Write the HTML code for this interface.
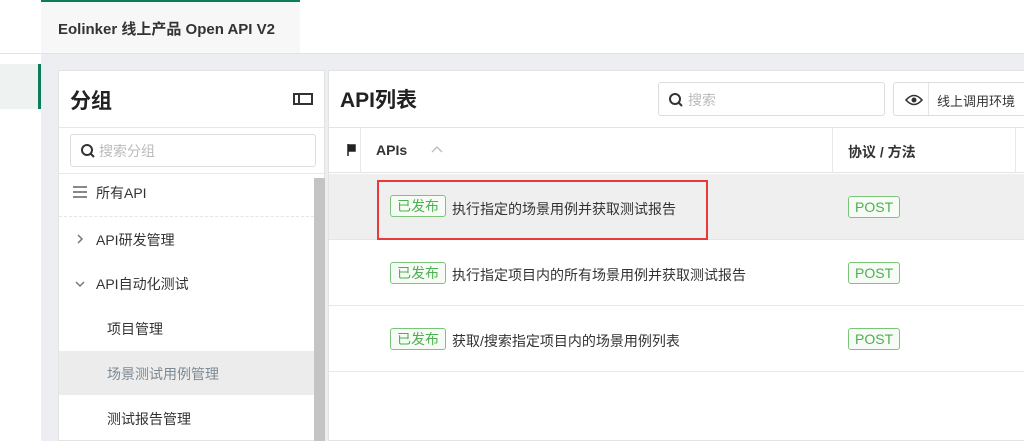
<!DOCTYPE html>
<html><head><meta charset="utf-8"><style>
*{margin:0;padding:0;box-sizing:border-box}
body{width:1024px;height:441px;overflow:hidden;background:#fff;font-family:"Liberation Sans","Noto Sans CJK SC",sans-serif;position:relative;color:#333}
.a{position:absolute}
.tag{position:absolute;border:1px solid #7cc47a;background:#f6fcf5;color:#4caf50;border-radius:3px;font-size:14px;line-height:20px;padding:0 6px}
.t{font-size:14px;color:#333}
</style></head><body>
<div class="a" style="left:0;top:53px;width:1024px;height:1px;background:#e3e3e3"></div>
<div class="a" style="left:41px;top:0;width:259px;height:53px;background:#f7f7f7;border-top:2px solid #0b7d5a"></div>
<div class="a" style="left:58px;top:18px;font-size:15px;font-weight:bold;color:#333">Eolinker 线上产品 Open API V2</div>
<div class="a" style="left:0;top:64px;width:38px;height:45px;background:#eef3f1"></div>
<div class="a" style="left:38px;top:64px;width:3px;height:45px;background:#0b7d5a"></div>
<div class="a" style="left:41px;top:54px;width:983px;height:387px;background:#eceef1"></div>
<!-- left panel -->
<div class="a" style="left:58px;top:70px;width:267px;height:371px;background:#fff;border:1px solid #e3e3e3"></div>
<div class="a" style="left:70px;top:85px;font-size:21px;font-weight:bold;color:#222">分组</div>
<div class="a" style="left:293px;top:93px;width:20px;height:12px;border:2px solid #333"></div>
<div class="a" style="left:298px;top:93px;width:2px;height:12px;background:#333"></div>
<div class="a" style="left:59px;top:127px;width:265px;height:1px;background:#e8e8e8"></div>
<div class="a" style="left:70px;top:134px;width:246px;height:33px;border:1px solid #ddd;border-radius:3px"></div>
<svg class="a" style="left:80px;top:143px" width="16" height="16"><circle cx="7" cy="7" r="5" fill="none" stroke="#333" stroke-width="2"/><line x1="10.5" y1="10.5" x2="14" y2="14" stroke="#333" stroke-width="2"/></svg>
<div class="a" style="left:99px;top:141px;font-size:14px;color:#bbb">搜索分组</div>
<div class="a" style="left:59px;top:173px;width:265px;height:1px;background:#e8e8e8"></div>
<div class="a" style="left:314px;top:178px;width:11px;height:263px;background:#c4c4c4"></div>
<div class="a" style="left:73px;top:186px;width:14px;height:2px;background:#888;box-shadow:0 5px #888,0 10px #888"></div>
<div class="a t" style="left:96px;top:183px">所有API</div>
<div class="a" style="left:59px;top:216px;width:255px;border-top:1px dashed #e5e5e5"></div>
<svg class="a" style="left:75px;top:233px" width="10" height="12"><path d="M3 2L7 6L3 10" fill="none" stroke="#777" stroke-width="1.5"/></svg>
<div class="a t" style="left:96px;top:230px">API研发管理</div>
<svg class="a" style="left:74px;top:279px" width="12" height="10"><path d="M2 3L6 7L10 3" fill="none" stroke="#777" stroke-width="1.5"/></svg>
<div class="a t" style="left:96px;top:274px">API自动化测试</div>
<div class="a t" style="left:107px;top:319px">项目管理</div>
<div class="a" style="left:59px;top:351px;width:255px;height:44px;background:#ececec"></div>
<div class="a t" style="left:107px;top:364px;color:#7e8a93">场景测试用例管理</div>
<div class="a t" style="left:107px;top:409px">测试报告管理</div>
<!-- right panel -->
<div class="a" style="left:328px;top:70px;width:696px;height:371px;background:#fff;border:1px solid #e3e3e3;border-right:none"></div>
<div class="a" style="left:340px;top:84px;font-size:21px;font-weight:bold;color:#222">API列表</div>
<div class="a" style="left:658px;top:82px;width:227px;height:34px;border:1px solid #ddd;border-radius:3px"></div>
<svg class="a" style="left:668px;top:92px" width="16" height="16"><circle cx="7" cy="7" r="5" fill="none" stroke="#333" stroke-width="2"/><line x1="10.5" y1="10.5" x2="14" y2="14" stroke="#333" stroke-width="2"/></svg>
<div class="a" style="left:688px;top:90px;font-size:14px;color:#bbb">搜索</div>
<div class="a" style="left:893px;top:82px;width:140px;height:34px;border:1px solid #ddd;border-radius:3px"></div>
<div class="a" style="left:928px;top:83px;width:1px;height:32px;background:#e5e5e5"></div>
<svg class="a" style="left:905px;top:93px" width="18" height="14"><path d="M1 7Q9 -2 17 7Q9 16 1 7Z" fill="none" stroke="#333" stroke-width="1.6"/><circle cx="9" cy="7" r="2.5" fill="#333"/></svg>
<div class="a" style="left:937px;top:91px;font-size:13px;color:#333">线上调用环境</div>
<div class="a" style="left:329px;top:127px;width:695px;height:46px;border-top:1px solid #e3e3e3;border-bottom:1px solid #e3e3e3"></div>
<div class="a" style="left:360px;top:128px;width:1px;height:45px;background:#e8e8e8"></div>
<div class="a" style="left:832px;top:128px;width:1px;height:45px;background:#e8e8e8"></div>
<div class="a" style="left:1015px;top:128px;width:1px;height:45px;background:#e8e8e8"></div>
<svg class="a" style="left:347px;top:144px" width="10" height="12"><path d="M1 0V12M1 1H8V7H1" fill="#222" stroke="#222" stroke-width="1.5"/></svg>
<div class="a" style="left:376px;top:142px;font-size:14px;font-weight:bold">APIs</div>
<svg class="a" style="left:431px;top:145px" width="12" height="8"><path d="M1 7L6 2L11 7" fill="none" stroke="#bbb" stroke-width="1.3"/></svg>
<div class="a" style="left:848px;top:142px;font-size:14px;font-weight:bold">协议 / 方法</div>
<div class="a" style="left:329px;top:174px;width:695px;height:66px;background:#efefef;border-bottom:1px solid #e5e5e5"></div>
<div class="a" style="left:377px;top:180px;width:331px;height:60px;border:2px solid #e83a3a"></div>
<div class="tag" style="left:390px;top:195px">已发布</div>
<div class="a t" style="left:452px;top:199px">执行指定的场景用例并获取测试报告</div>
<div class="tag" style="left:848px;top:196px">POST</div>
<div class="a" style="left:329px;top:305px;width:695px;height:1px;background:#e8e8e8"></div>
<div class="tag" style="left:390px;top:262px">已发布</div>
<div class="a t" style="left:452px;top:265px">执行指定项目内的所有场景用例并获取测试报告</div>
<div class="tag" style="left:848px;top:262px">POST</div>
<div class="a" style="left:329px;top:371px;width:695px;height:1px;background:#e8e8e8"></div>
<div class="tag" style="left:390px;top:328px">已发布</div>
<div class="a t" style="left:452px;top:331px">获取/搜索指定项目内的场景用例列表</div>
<div class="tag" style="left:848px;top:328px">POST</div>
</body></html>
